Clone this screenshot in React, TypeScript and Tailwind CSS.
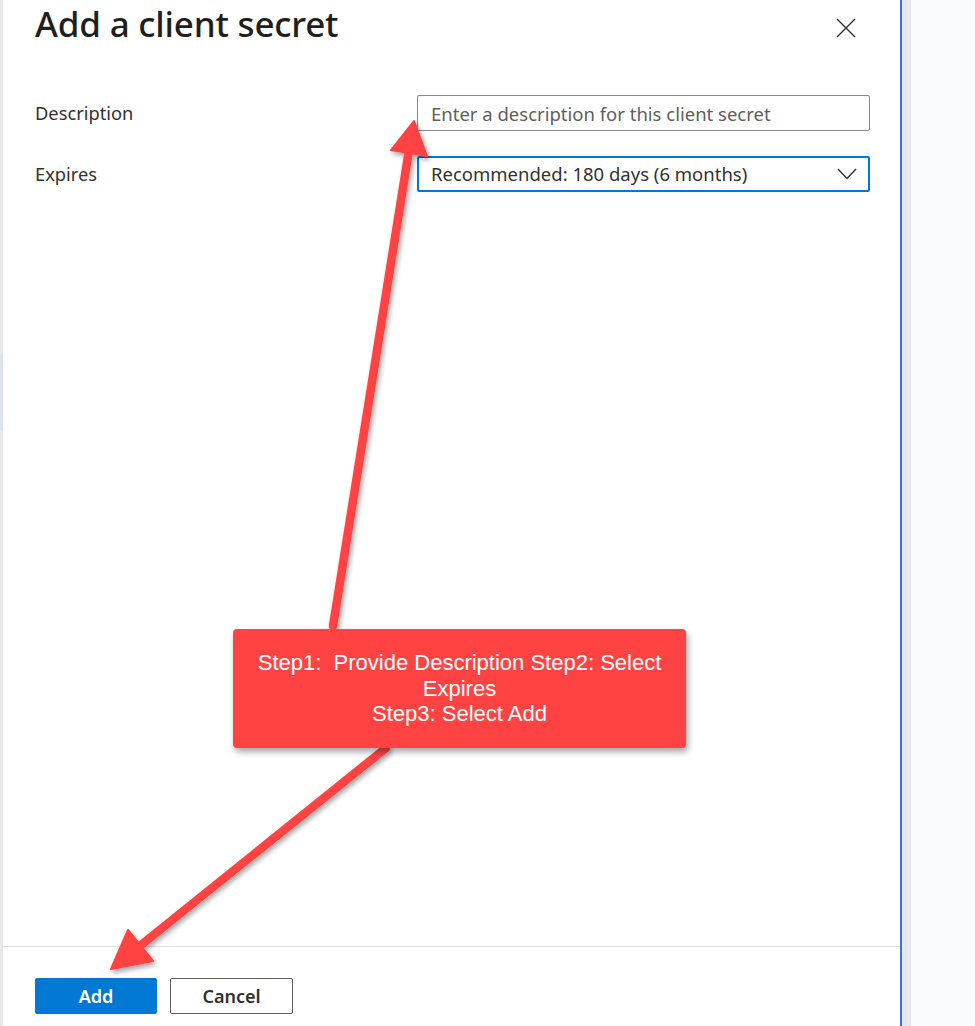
import React from 'react';

const ui = { fontFamily: '"Noto Sans", "Open Sans", sans-serif' };

const Arrows = () => (
  <svg className="pointer-events-none absolute inset-0" width="975" height="1026" viewBox="0 0 975 1026">
    <defs>
      <filter id="shadow" x="-20%" y="-20%" width="140%" height="140%">
        <feDropShadow dx="2" dy="3" stdDeviation="2.5" floodColor="#000" floodOpacity="0.35" />
      </filter>
    </defs>
    <g filter="url(#shadow)" fill="#ff4343" stroke="#ff4343">
      {/* arrow to description input */}
      <line x1="333" y1="626" x2="409" y2="150" strokeWidth="8.5" strokeLinecap="round" />
      <polygon points="414,121 391,150 427,156" strokeWidth="2" strokeLinejoin="round" />
      {/* arrow to Add button */}
      <line x1="386" y1="748" x2="141" y2="945" strokeWidth="8.5" strokeLinecap="round" />
      <polygon points="111,969 128,930 153,961" strokeWidth="2" strokeLinejoin="round" />
    </g>
  </svg>
);

export default function App() {
  return (
    <div className="relative flex h-[1026px] w-[975px] overflow-hidden bg-[#fafbfc]" style={ui}>
      {/* page behind the panel, left edge */}
      <div className="flex w-[3px] flex-col bg-[#e9e9e9]">
        <div className="h-[355px]" />
        <div className="h-[75px] bg-[#dde3ec]" />
      </div>

      {/* panel */}
      <div className="flex w-[897px] flex-col bg-white">
        <div className="flex items-start justify-between pl-8 pr-[44px] pt-[1px]">
          <h1 className="text-[35px] font-medium leading-[46px] tracking-[-0.2px] text-[#201f1e]">Add a client secret</h1>
          <button className="mt-[17px] text-[#323130]" aria-label="Close">
            <svg width="20" height="20" viewBox="0 0 20 20" fill="none" stroke="currentColor" strokeWidth="1.4">
              <path d="M1 1 L19 19 M19 1 L1 19" />
            </svg>
          </button>
        </div>

        <div className="flex-1 pl-8 pr-[30px] pt-[48px]">
          <div className="flex items-center justify-between">
            <label className="text-[18.3px] text-[#323130]">Description</label>
            <input
              className="h-[36px] w-[453px] rounded-[2px] border border-[#8a8886] px-[13px] text-[18.5px] text-[#323130] outline-none placeholder:text-[#605e5c]"
              placeholder="Enter a description for this client secret"
            />
          </div>
          <div className="mt-[25px] flex items-center justify-between">
            <label className="text-[18.3px] text-[#323130]">Expires</label>
            <div className="flex h-[36px] w-[453px] items-center justify-between rounded-[2px] border-2 border-[#0078d4] pl-[12px] pr-[11px]">
              <span className="text-[18.5px] text-[#323130]">Recommended: 180 days (6 months)</span>
              <svg width="20" height="12" viewBox="0 0 20 12" fill="none" stroke="#323130" strokeWidth="1.4">
                <path d="M1 1 L10 10.5 L19 1" />
              </svg>
            </div>
          </div>
        </div>

        <div className="h-[1px] bg-[#e1dfdd]" />
        <div className="flex gap-[13px] pb-[12px] pl-8 pt-[31px]">
          <button className="h-[36px] w-[122px] rounded-[2px] bg-[#0078d4] text-[18px] font-semibold text-white">Add</button>
          <button className="h-[36px] w-[123px] rounded-[2px] border border-[#605e5c] bg-white text-[18px] font-semibold text-[#323130]">
            Cancel
          </button>
        </div>
      </div>

      {/* right side of the window */}
      <div className="w-[2px] bg-[#3b6ff0]" />
      <div className="w-[9px] bg-[#e3e8ef]" />
      <div className="flex-1 bg-[#fafbfc]" />

      <Arrows />

      {/* callout */}
      <div
        className="absolute left-[233px] top-[629px] flex h-[119px] w-[453px] items-center justify-center rounded-[4px] bg-[#ff4343] px-4 text-center text-[22px] leading-[25.5px] text-white shadow-[2px_4px_6px_rgba(0,0,0,0.35)]"
        style={{ fontFamily: '"Liberation Sans", Arial, sans-serif', whiteSpace: 'pre-wrap' }}
      >
        {'Step1:  Provide Description Step2: Select Expires\nStep3: Select Add'}
      </div>
    </div>
  );
}
